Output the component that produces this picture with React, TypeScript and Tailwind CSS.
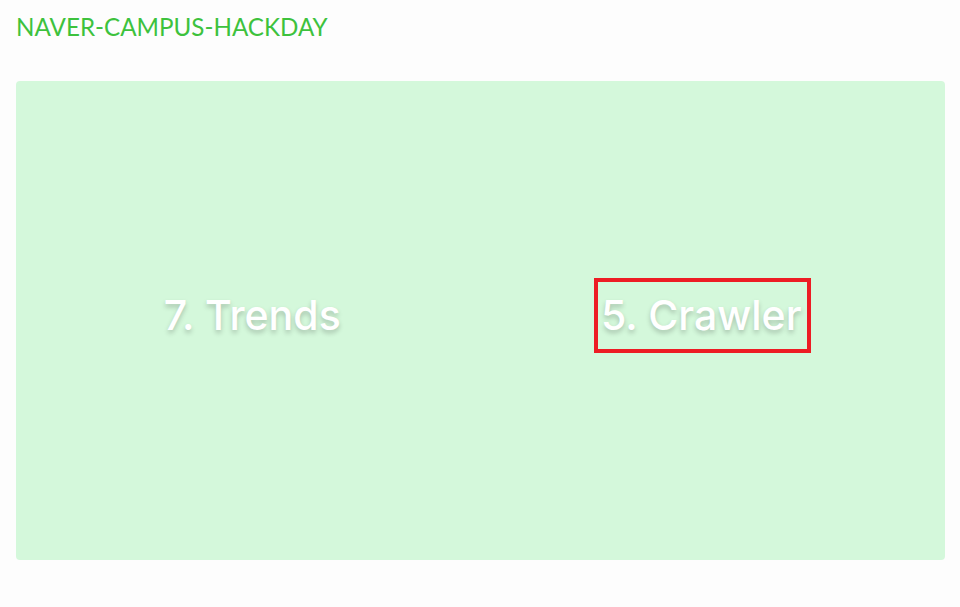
import React from "react";

export default function App() {
  return (
    <div className="min-h-[607px] w-[960px] bg-[#fdfdfd] px-4 pt-[12px]">
      <h1 className="text-[24.2px] leading-[30px] text-[#3dc23d] font-['Lato',sans-serif]">
        NAVER-CAMPUS-HACKDAY
      </h1>
      <div className="mt-[39px] h-[479px] w-[929px] rounded-[4px] bg-[#d4f8db] flex items-center">
        <div className="flex-1 flex justify-center pb-[10px]">
          <span className="ml-[10px] text-white text-[41px] leading-[57px] font-medium font-['Inter',sans-serif] [text-shadow:0_3px_5px_rgba(0,0,0,0.22)] border-[4px] border-transparent pl-[4px] pr-[6px]">
            7. Trends
          </span>
        </div>
        <div className="flex-1 flex justify-center pb-[10px]">
          <span className="mr-[21px] text-white text-[41px] leading-[57px] font-medium font-['Inter',sans-serif] [text-shadow:0_3px_5px_rgba(0,0,0,0.22)] border-[4px] border-[#ed1c24] pl-[3px] pr-[5px] py-[5px]">
            5. Crawler
          </span>
        </div>
      </div>
    </div>
  );
}
